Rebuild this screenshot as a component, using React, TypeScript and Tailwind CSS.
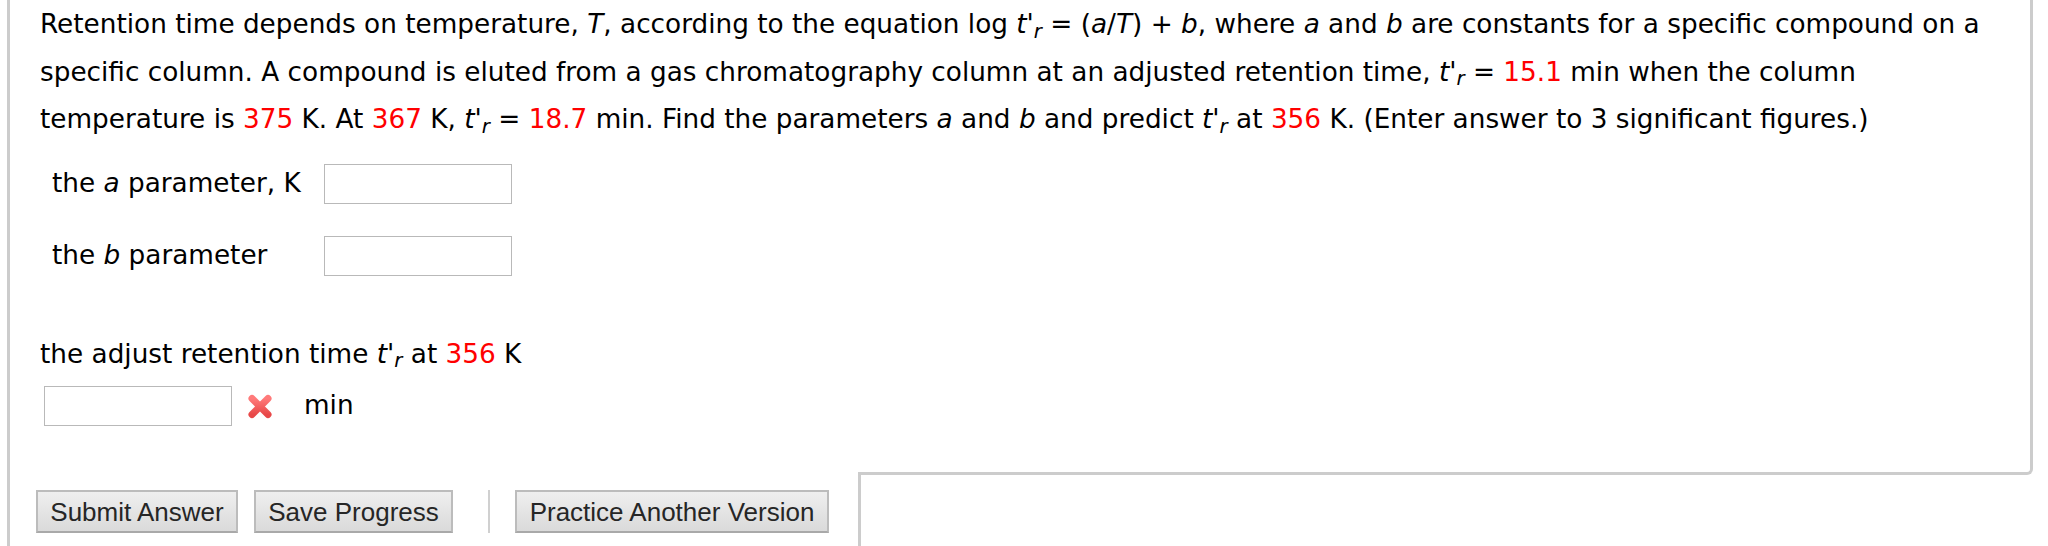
import type React from "react"

function Red({ children }: { children: React.ReactNode }) {
  return <span className="text-[#ff0000]">{children}</span>
}

// t'r symbol: italic t with prime and an italic subscript r
function TPrimeR() {
  return (
    <span className="italic">
      t'<sub className="italic">r</sub>
    </span>
  )
}

function AnswerBox({ className = "" }: { className?: string }) {
  return <div className={`h-[40px] border border-[#b9b9b9] bg-white ${className}`} />
}

function WrongMark() {
  return (
    <svg width="26" height="25" viewBox="0 0 26 25" className="shrink-0">
      <defs>
        <linearGradient id="xg" x1="0" y1="0" x2="0" y2="1">
          <stop offset="0" stopColor="#ff7a7a" />
          <stop offset="1" stopColor="#e84848" />
        </linearGradient>
      </defs>
      <path d="M5 4.5 L21 20.5 M21 4.5 L5 20.5" stroke="url(#xg)" strokeWidth="7" strokeLinecap="round" />
    </svg>
  )
}

function GrayButton({ label, width }: { label: string; width: string }) {
  return (
    <button
      className={`${width} h-[43px] shrink-0 border-2 border-[#bcbcbc] border-b-[#a9a9a9] bg-gradient-to-b from-[#efefef] to-[#dadada] text-center font-['Liberation_Sans',Arial,sans-serif] text-[26px] leading-none text-[#262626]`}
    >
      {label}
    </button>
  )
}

export default function App() {
  return (
    <div className="h-[546px] w-[2048px] overflow-hidden bg-white font-['DejaVu_Sans',Verdana,sans-serif] text-[26.3px] text-black">
      <div className="ml-[7px] flex w-[2026px] flex-col">
        {/* question body */}
        <div className="h-[475px] rounded-br-[6px] border-x-[3px] border-b-[3px] border-[#cccccc] pl-[30px] pt-[1px]">
          <p className="leading-[47.5px]">
            Retention time depends on temperature, <i>T</i>, according to the equation log <TPrimeR /> = (
            <i>a</i>/<i>T</i>) + <i>b</i>, where <i>a</i> and <i>b</i> are constants for a specific compound on a
            <br />
            specific column. A compound is eluted from a gas chromatography column at an adjusted retention time,{" "}
            <TPrimeR /> = <Red>15.1</Red> min when the column
            <br />
            temperature is <Red>375</Red> K. At <Red>367</Red> K, <TPrimeR /> = <Red>18.7</Red> min. Find the
            parameters <i>a</i> and <i>b</i> and predict <TPrimeR /> at <Red>356</Red> K. (Enter answer to 3
            significant figures.)
          </p>

          <div className="mt-[4px] flex flex-col">
            <div className="flex h-[72px] items-center">
              <span className="w-[284px] pl-[12px]">
                the <i>a</i> parameter, K
              </span>
              <AnswerBox className="w-[188px]" />
            </div>
            <div className="flex h-[72px] items-center">
              <span className="w-[284px] pl-[12px]">
                the <i>b</i> parameter
              </span>
              <AnswerBox className="w-[188px]" />
            </div>
          </div>

          <p className="mt-[39px] leading-[47.5px]">
            the adjust retention time <TPrimeR /> at <Red>356</Red> K
          </p>
          <div className="mt-[8px] flex h-[40px] items-center">
            <AnswerBox className="ml-[4px] w-[188px]" />
            <div className="ml-[15px]">
              <WrongMark />
            </div>
            <span className="ml-[31px]">min</span>
          </div>
        </div>

        {/* button bar sits in a notch under the question body */}
        <div className="-mt-[3px] flex h-[74px]">
          <div className="relative z-10 flex w-[851px] items-start gap-[16px] border-l-[3px] border-[#cccccc] bg-white pl-[26px] pt-[18px]">
            <GrayButton label="Submit Answer" width="w-[202px]" />
            <GrayButton label="Save Progress" width="w-[199px]" />
            <div className="ml-[19px] mr-[9px] h-[43px] w-[2px] bg-[#d0d0d0]" />
            <GrayButton label="Practice Another Version" width="w-[314px]" />
          </div>
          <div className="flex-1 border-l-[3px] border-[#cccccc]" />
        </div>
      </div>
    </div>
  )
}
